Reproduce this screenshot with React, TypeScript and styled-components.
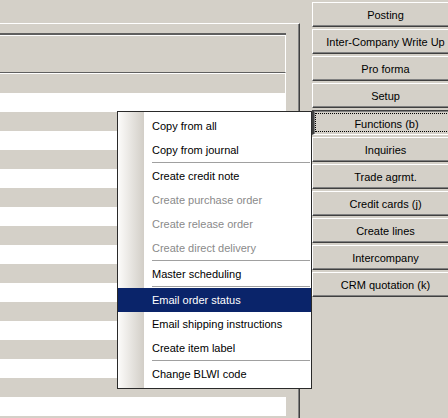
import * as React from 'react';
import styled, { createGlobalStyle } from 'styled-components';

const GlobalStyle = createGlobalStyle`
  html, body {
    margin: 0;
    padding: 0;
    background-color: #d4d0c8;
    overflow: hidden;
  }
`;

const Page = styled.div`
  position: relative;
  display: flex;
  width: 448px;
  height: 418px;
  overflow: hidden;
  background-color: #d4d0c8;
  font-family: 'Liberation Sans', Arial, sans-serif;
  font-size: 11px;
  color: #000000;
`;

const LeftPane = styled.div`
  width: 300px;
  flex-shrink: 0;
  padding-top: 23px;
  box-sizing: border-box;
`;

const GroupFrame = styled.div`
  height: 100%;
  box-sizing: border-box;
  border-top: 1px solid #ffffff;
  border-right: 1px solid #404040;
  box-shadow: inset -1px 0 0 #808080;
  padding: 9px 12px 0 0;
`;

const Grid = styled.div`
  width: 286px;
  border-top: 2px solid #5f5f5f;
`;

const HeaderBar = styled.div<{ $h: number; $bottom?: boolean }>`
  height: ${(p) => p.$h}px;
  box-sizing: border-box;
  border-top: 1px solid #ffffff;
  border-right: 1px solid #ffffff;
  border-bottom: ${(p) => (p.$bottom ? '1px solid #5f5f5f' : 'none')};
  background-color: #d4d0c8;
`;

const Row = styled.div<{ $odd: boolean }>`
  height: 19px;
  background-color: ${(p) => (p.$odd ? '#d4d0c8' : '#ffffff')};
`;

const ButtonColumn = styled.div`
  display: flex;
  flex-direction: column;
  gap: 2px;
  margin-left: 12px;
  padding-top: 2px;
  width: 146px;
  flex-shrink: 0;
`;

const ActionButton = styled.div<{ $pressed?: boolean }>`
  height: 25px;
  box-sizing: border-box;
  display: flex;
  align-items: center;
  justify-content: center;
  white-space: nowrap;
  background-color: #d4d0c8;
  border-top: 1px solid ${(p) => (p.$pressed ? '#404040' : '#ffffff')};
  border-left: ${(p) => (p.$pressed ? '2px solid #404040' : '1px solid #ffffff')};
  border-bottom: 1px solid ${(p) => (p.$pressed ? '#ffffff' : '#404040')};
  box-shadow: ${(p) => (p.$pressed ? 'inset 1px 1px 0 #808080' : 'inset 0 -1px 0 #808080')};
  padding-top: ${(p) => (p.$pressed ? '2px' : '0')};
  padding-left: ${(p) => (p.$pressed ? '1px' : '0')};
  outline: ${(p) => (p.$pressed ? '1px dotted #000000' : 'none')};
  outline-offset: -4px;
`;

const Menu = styled.div`
  position: absolute;
  left: 117px;
  top: 111px;
  width: 195px;
  height: 278px;
  box-sizing: border-box;
  border: 1px solid #2a2a2a;
  padding: 2px 0;
  display: flex;
  flex-direction: column;
  background: linear-gradient(
    to right,
    #ffffff 0,
    #f9f8f6 2px,
    #d2cec7 26px,
    #ffffff 26px
  );
  z-index: 10;
`;

const MenuItem = styled.div<{ $disabled?: boolean; $active?: boolean }>`
  height: 24px;
  line-height: 24px;
  padding-left: 34px;
  white-space: nowrap;
  color: ${(p) => (p.$active ? '#ffffff' : p.$disabled ? '#8a8a8a' : '#000000')};
  background-color: ${(p) => (p.$active ? '#0a246a' : 'transparent')};
`;

const Separator = styled.div`
  height: 2px;
  margin: 0 1px 0 34px;
  border-top: 1px solid #a0a0a0;
  box-sizing: border-box;
`;

type Entry = { label: string; disabled?: boolean; active?: boolean } | 'sep';

const menuEntries: Entry[] = [
  { label: 'Copy from all' },
  { label: 'Copy from journal' },
  'sep',
  { label: 'Create credit note' },
  { label: 'Create purchase order', disabled: true },
  { label: 'Create release order', disabled: true },
  { label: 'Create direct delivery', disabled: true },
  'sep',
  { label: 'Master scheduling' },
  'sep',
  { label: 'Email order status', active: true },
  { label: 'Email shipping instructions' },
  { label: 'Create item label' },
  'sep',
  { label: 'Change BLWI code' },
];

const buttons = [
  'Posting',
  'Inter-Company Write Up',
  'Pro forma',
  'Setup',
  'Functions (b)',
  'Inquiries',
  'Trade agrmt.',
  'Credit cards (j)',
  'Create lines',
  'Intercompany',
  'CRM quotation (k)',
];

const App = () => (
  <Page>
    <GlobalStyle />
    <LeftPane>
      <GroupFrame>
        <Grid>
          <HeaderBar $h={38} $bottom />
          <HeaderBar $h={20} />
          {Array.from({ length: 17 }).map((_, i) => (
            <Row key={i} $odd={i % 2 === 1} />
          ))}
        </Grid>
      </GroupFrame>
    </LeftPane>
    <ButtonColumn>
      {buttons.map((b) => (
        <ActionButton key={b} $pressed={b === 'Functions (b)'}>
          {b}
        </ActionButton>
      ))}
    </ButtonColumn>
    <Menu>
      {menuEntries.map((e, i) =>
        e === 'sep' ? (
          <Separator key={i} />
        ) : (
          <MenuItem key={i} $disabled={e.disabled} $active={e.active}>
            {e.label}
          </MenuItem>
        )
      )}
    </Menu>
  </Page>
);

export default App;
